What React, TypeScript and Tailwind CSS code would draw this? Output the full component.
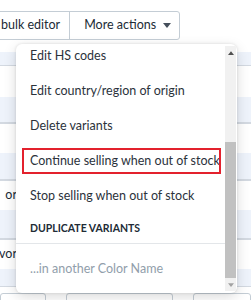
import React from "react"

const font = { fontFamily: 'Lato, "Open Sans", sans-serif' }

// bands of the table that sits behind the popover
const rows: { h: number; band?: boolean; split?: boolean; label?: string }[] = [
  { h: 14, band: true },
  { h: 31 },
  { h: 27, band: true, split: true },
  { h: 29 },
  { h: 28, band: true, split: true },
  { h: 29, label: "or" },
  { h: 30, band: true, split: true },
  { h: 29, label: "vor" },
  { h: 18, band: true },
]

const items = [
  "Edit HS codes",
  "Edit country/region of origin",
  "Delete variants",
  "Continue selling when out of stock",
  "Stop selling when out of stock",
]

function Caret({ className = "" }: { className?: string }) {
  return (
    <svg width="8" height="5" viewBox="0 0 8 5" className={className}>
      <path d="M0 0h8L4 5z" fill="currentColor" />
    </svg>
  )
}

export default function App() {
  return (
    <div className="relative w-[251px] h-[300px] overflow-hidden bg-white text-[#212b36]" style={font}>
      {/* button group */}
      <div className="h-[52px] pt-[11px]">
        <div className="flex h-[29px] ml-[-12px] w-max rounded-[3px] border border-[#c4cdd5] bg-white text-[12.5px]">
          <div className="flex items-center pl-[12px] pr-[9px] border-r border-[#c4cdd5]">bulk editor</div>
          <div className="flex items-center gap-[7px] pl-[14px] pr-[8px]">
            More actions
            <Caret className="text-[#454f5b]" />
          </div>
        </div>
      </div>

      {/* table rows in the background */}
      <div className="flex flex-col">
        {rows.map((r, i) => (
          <div
            key={i}
            className={`flex flex-col border-b ${r.band ? "bg-[#eef3fb] border-[#d3d9e1]" : "bg-white border-transparent"}`}
            style={{ height: r.h }}
          >
            {r.split && <div className="flex-1 border-b border-[#d3d9e1]" />}
            {r.label && (
              <div className="flex-1 flex items-center justify-end w-[17px] text-[12.5px] text-[#212b36]">
                {r.label}
              </div>
            )}
          </div>
        ))}
        <div className="flex gap-[20px] pt-[6px]">
          <div className="w-[48px] h-[10px] rounded-[3px] border border-[#c4cdd5]" />
          <div className="w-[112px] h-[10px] rounded-[3px] border border-[#c4cdd5]" />
          <div className="w-[60px] h-[10px] rounded-[3px] border border-[#c4cdd5]" />
        </div>
      </div>

      {/* popover */}
      <div className="absolute left-[16px] top-[44px] w-[221px] h-[249px] rounded-[6px] bg-white shadow-[0_0_3px_rgba(0,0,0,0.12),0_4px_14px_rgba(0,0,0,0.14)] overflow-hidden flex">
        <div className="flex-1 flex flex-col mt-[-5px] text-[12.5px] text-[#2b323b]">
          {items.map((t, i) => (
            <div key={t} className="relative h-[35px] flex items-center pl-[14px] shrink-0 whitespace-nowrap">
              {i === 3 && (
                <div className="absolute left-[6px] right-[4px] top-[4px] bottom-[5px] border-2 border-[#e3212d]" />
              )}
              {t}
            </div>
          ))}
          <div className="h-[30px] flex items-center pl-[14px] text-[10.5px] font-bold text-[#212b36] border-b border-[#e3e6e9] shrink-0">
            DUPLICATE VARIANTS
          </div>
          <div className="pt-[8px]">
            <div className="h-[35px] flex items-center pl-[14px] text-[#919eab]">...in another Color Name</div>
          </div>
        </div>
        {/* scrollbar */}
        <div className="w-[11px] mr-[1px] my-[2px] bg-[#f1f1f1] flex flex-col items-center">
          <div className="h-[14px] flex items-center">
            <Caret className="rotate-180 w-[6px] h-[4px] text-[#505050]" />
          </div>
          <div className="mt-[82px] w-full h-[136px] bg-[#c1c1c1]" />
          <div className="flex-1 flex items-center">
            <Caret className="w-[6px] h-[4px] text-[#a3a3a3]" />
          </div>
        </div>
      </div>
    </div>
  )
}
